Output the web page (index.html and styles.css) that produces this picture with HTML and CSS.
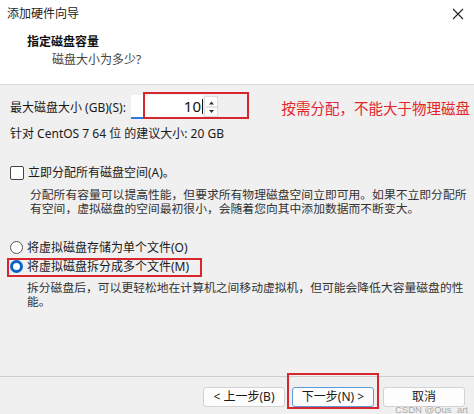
FILE: index.html
```html
<!DOCTYPE html>
<html lang="zh">
<head>
<meta charset="utf-8">
<link rel="stylesheet" href="styles.css">
</head>
<body>
<div class="win">
  <div class="header">
    <div class="titlebar">
      <span class="title">添加硬件向导</span>
      <svg class="close" width="12" height="12" viewBox="0 0 12 12"><path d="M1 1L11 11M11 1L1 11" stroke="#222" stroke-width="1.1" fill="none"/></svg>
    </div>
    <div class="h1">指定磁盘容量</div>
    <div class="h2">磁盘大小为多少?</div>
  </div>
  <div class="body">
    <div class="row">
      <span class="label">最大磁盘大小 (GB)(S):</span>
      <div class="field">
        <span class="num">10</span><span class="caret"></span>
        <div class="spin">
          <svg width="13" height="20" viewBox="0 0 13 20"><path d="M4 7.5L6.5 4.5L9 7.5Z" fill="#333"/><path d="M4 13L6.5 16L9 13Z" fill="#333"/><path d="M1 10H12" stroke="#ccc" stroke-width="1"/></svg>
        </div>
        <div class="redbox"></div>
      </div>
      <span class="note">按需分配，不能大于物理磁盘</span>
    </div>
    <div class="line">针对 CentOS 7 64 位 的建议大小: 20 GB</div>
    <div class="check-line"><span class="checkbox"></span>立即分配所有磁盘空间(A)。</div>
    <p class="para p1">分配所有容量可以提高性能，但要求所有物理磁盘空间立即可用。如果不立即分配所<br>有空间，虚拟磁盘的空间最初很小，会随着您向其中添加数据而不断变大。</p>
    <div class="radio-line first"><span class="radio"></span>将虚拟磁盘存储为单个文件(O)</div>
    <div class="radio-line sel"><span class="radio on"></span>将虚拟磁盘拆分成多个文件(M)<div class="redbox2"></div></div>
    <p class="para p2">拆分磁盘后，可以更轻松地在计算机之间移动虚拟机，但可能会降低大容量磁盘的性<br>能。</p>
  </div>
  <div class="footer">
    <button class="btn">&lt; 上一步(B)</button>
    <div class="next-wrap"><button class="btn primary">下一步(N) &gt;</button><div class="redbox3"></div></div>
    <button class="btn">取消</button>
    <span class="wm">CSDN @Qus_art</span>
  </div>
</div>
</body>
</html>
```
FILE: styles.css
```css
html, body {
  margin: 0;
  padding: 0;
}
body {
  width: 474px;
  height: 414px;
  overflow: hidden;
  background: #f0f0f0;
  font-family: "Noto Sans", "Noto Sans CJK SC", sans-serif;
  font-size: 12px;
  color: #1a1a1a;
}
.win {
  height: 414px;
  display: flex;
  flex-direction: column;
}
.header {
  background: #fff;
  height: 84px;
  border-bottom: 1px solid #d8d8d8;
  box-sizing: content-box;
}
.titlebar {
  display: flex;
  align-items: center;
  justify-content: space-between;
  padding: 6px 10px 0 7px;
  height: 16px;
  line-height: 16px;
}
.title {
  font-size: 12px;
  color: #222;
}
.h1 {
  margin-top: 12px;
  padding-left: 27px;
  line-height: 16px;
  font-weight: bold;
  font-size: 12px;
  color: #111;
}
.h2 {
  margin-top: 2px;
  padding-left: 52px;
  line-height: 16px;
  color: #444;
}
.body {
  padding-left: 10px;
}
.row {
  margin-top: 8px;
  height: 28px;
  display: flex;
  align-items: center;
}
.label { width: 121px; }
.field {
  position: relative;
  width: 72px;
  height: 22px;
  background: #fff;
  border-bottom: 2px solid #2f7ad8;
  display: flex;
  align-items: center;
  justify-content: flex-end;
}
.num {
  font-size: 15px;
  color: #111;
  line-height: 20px;
}
.caret {
  width: 1px;
  height: 15px;
  background: #111;
  margin-left: 1px;
}
.spin {
  position: absolute;
  left: 73px;
  top: 1px;
  width: 14px;
  height: 21px;
  background: #fdfdfd;
  border: 1px solid #ddd;
  box-sizing: border-box;
}
.spin svg { display: block; }
.redbox {
  position: absolute;
  left: 12px;
  top: -3px;
  width: 106px;
  height: 27px;
  border: 2px solid #d8262e;
  box-sizing: border-box;
}
.note {
  margin-left: auto;
  margin-right: 4px;
  color: #e3242b;
  font-size: 14.5px;
}
.line {
  margin-top: 5px;
  line-height: 16px;
}
.check-line {
  margin-top: 23px;
  line-height: 16px;
  display: flex;
  align-items: center;
}
.checkbox {
  width: 12px;
  height: 12px;
  border: 1px solid #444;
  border-radius: 2px;
  background: #fff;
  margin-right: 4px;
  box-sizing: content-box;
}
.para {
  margin: 0;
  font-size: 11.8px;
  line-height: 13.5px;
  color: #333;
  white-space: nowrap;
}
.p1 {
  margin-top: 7px;
  padding-left: 20px;
}
.radio-line {
  position: relative;
  height: 19px;
  line-height: 19px;
  display: flex;
  align-items: center;
}
.radio-line.first { margin-top: 23px; }
.radio {
  width: 11px;
  height: 11px;
  border: 1px solid #555;
  border-radius: 50%;
  background: #fff;
  margin-right: 4px;
  box-sizing: content-box;
}
.radio.on {
  width: 7px;
  height: 7px;
  border: 3px solid #0a63c9;
  background: #fff;
}
.redbox2 {
  position: absolute;
  left: -3px;
  top: 1px;
  width: 195px;
  height: 19px;
  border: 2px solid #d8262e;
  box-sizing: border-box;
}
.p2 {
  margin-top: 5px;
  padding-left: 17px;
}
.footer {
  margin-top: auto;
  height: 38px;
  border-top: 1px solid #cfcfcf;
  display: flex;
  align-items: flex-start;
  justify-content: flex-end;
  padding: 10px 9px 0 0;
  position: relative;
  box-sizing: border-box;
}
.btn {
  height: 20px;
  width: 82px;
  padding: 0;
  font-family: "Noto Sans", "Noto Sans CJK SC", sans-serif;
  font-size: 12px;
  color: #1a1a1a;
  background: #fdfdfd;
  border: 1px solid #d2d2d2;
  border-radius: 3px;
  line-height: 18px;
}
.next-wrap {
  position: relative;
  margin: 0 9px 0 7px;
}
.btn.primary {
  border-color: #5c9ad8;
}
.redbox3 {
  position: absolute;
  left: -5px;
  top: -14px;
  width: 92px;
  height: 36px;
  border: 2px solid #d8262e;
  box-sizing: border-box;
}
.wm {
  position: absolute;
  right: 6px;
  bottom: 0;
  font-size: 9.5px;
  line-height: 9px;
  color: #aaa;
  font-family: "Liberation Sans", sans-serif;
}
```
